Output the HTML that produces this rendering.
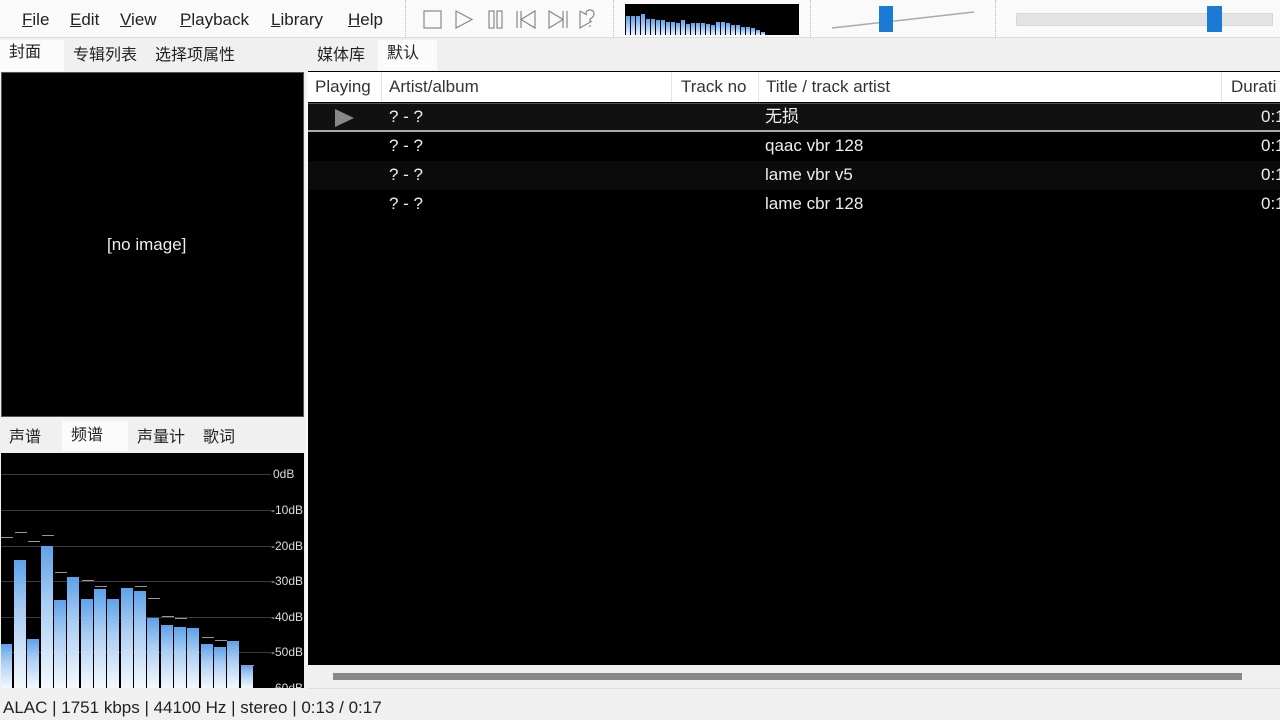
<!DOCTYPE html>
<html><head><meta charset="utf-8"><style>
*{margin:0;padding:0;box-sizing:border-box}
body{width:1280px;height:720px;overflow:hidden;background:#f0f0f0;font-family:"Liberation Sans","Noto Sans CJK SC",sans-serif;position:relative;color:#111}
.a{position:absolute;white-space:nowrap}
.menu{font-size:17px;top:10px;color:#222}
.sep{position:absolute;top:0;width:0;height:38px;border-left:1px dotted #bbb}
.tab{position:absolute;top:40px;height:31px;font-size:16px;line-height:20px;padding:4px 0 0 9px;color:#222}
.hd{position:absolute;top:72px;height:30px;font-size:17px;color:#333;padding:5px 0 0 7px;border-right:1px solid #e3e3e3;background:#fff}
.row{position:absolute;left:308px;width:972px;height:29px;font-size:17px;color:#eee}
.row span{position:absolute;top:4px;line-height:20px}
.bar{position:absolute;bottom:0;width:12px;background:linear-gradient(to bottom,#5da2ea 0,#aacdf3 40%,#f4f9fe 100%)}
.pk{position:absolute;width:12px;height:1px;background:#999}
.db{position:absolute;left:270px;font-size:12px;color:#ddd}
.gl{position:absolute;left:0;width:270px;height:1px;background:#3a3a3a}
</style></head><body>
<div class="a" style="left:0;top:0;width:1280px;height:38px;background:#fafafa;border-bottom:1px solid #ddd"></div>
<div class="a menu" style="left:22px"><u>F</u>ile</div>
<div class="a menu" style="left:70px"><u>E</u>dit</div>
<div class="a menu" style="left:120px"><u>V</u>iew</div>
<div class="a menu" style="left:180px"><u>P</u>layback</div>
<div class="a menu" style="left:271px"><u>L</u>ibrary</div>
<div class="a menu" style="left:348px"><u>H</u>elp</div>
<div class="sep" style="left:405px"></div><div class="sep" style="left:613px"></div><div class="sep" style="left:810px"></div><div class="sep" style="left:995px"></div>
<svg class="a" style="left:420px;top:8px" width="185" height="24" viewBox="0 0 185 24" fill="none" stroke="#888" stroke-width="1.2">
<rect x="4" y="3" width="17" height="17"/>
<path d="M36 3 L52 11.5 L36 20 Z"/>
<rect x="69" y="3" width="5" height="17"/><rect x="77" y="3" width="5" height="17"/>
<path d="M97 3 V20 M101 3 V20 M101 11.5 L115 3 V20 Z"/>
<path d="M129 3 V20 L143 11.5 Z M143 3 V20 M147 3 V20"/>
<path d="M160 3 V20 L172 13 M160 3 L167 7"/><path d="M166 6 Q166 2 170 2 Q174 2 174 6 Q174 9 170 11 V14 M170 17 V19" />
</svg>
<div class="a" style="left:625px;top:4px;width:174px;height:31px;background:#000;overflow:hidden">
<svg width="174" height="31"><defs><linearGradient id="g" x1="0" y1="0" x2="0" y2="1"><stop offset="0" stop-color="#5da2ea"/><stop offset="1" stop-color="#eef6ff"/></linearGradient></defs>
<g fill="url(#g)">
<rect x="1" y="12" width="4" height="19"/><rect x="6" y="12" width="4" height="19"/><rect x="11" y="12" width="4" height="19"/><rect x="16" y="10" width="4" height="21"/><rect x="21" y="15" width="4" height="16"/><rect x="26" y="15" width="4" height="16"/><rect x="31" y="16" width="4" height="15"/><rect x="36" y="16" width="4" height="15"/><rect x="41" y="18" width="4" height="13"/><rect x="46" y="18" width="4" height="13"/><rect x="51" y="19" width="4" height="12"/><rect x="56" y="16" width="4" height="15"/><rect x="61" y="20" width="4" height="11"/><rect x="66" y="19" width="4" height="12"/><rect x="71" y="19" width="4" height="12"/><rect x="76" y="19" width="4" height="12"/><rect x="81" y="20" width="4" height="11"/><rect x="86" y="21" width="4" height="10"/><rect x="91" y="18" width="4" height="13"/><rect x="96" y="18" width="4" height="13"/><rect x="101" y="19" width="4" height="12"/><rect x="106" y="21" width="4" height="10"/><rect x="111" y="21" width="4" height="10"/><rect x="116" y="23" width="4" height="8"/><rect x="121" y="23" width="4" height="8"/><rect x="126" y="24" width="4" height="7"/><rect x="131" y="26" width="4" height="5"/><rect x="136" y="28" width="4" height="3"/></g></svg></div>
<svg class="a" style="left:830px;top:6px" width="150" height="28"><line x1="2" y1="22" x2="144" y2="6" stroke="#aaa" stroke-width="1.5"/><rect x="49" y="0" width="14" height="26" fill="#1a7ad4"/></svg>
<div class="a" style="left:1016px;top:13px;width:257px;height:13px;background:#e4e4e4;border:1px solid #d8d8d8"></div>
<div class="a" style="left:1207px;top:6px;width:15px;height:26px;background:#1a7ad4"></div>

<div class="tab" style="left:0;width:64px;background:#fbfbfb;padding-top:3px">封面</div>
<div class="tab" style="left:64px;width:82px;padding-top:6px">专辑列表</div>
<div class="tab" style="left:146px;width:100px;padding-top:6px">选择项属性</div>
<div class="a" style="left:1px;top:72px;width:303px;height:345px;background:#000;border:1px solid #555"></div>
<div class="a" style="left:107px;top:235px;font-size:17px;color:#eee">[no image]</div>
<div class="tab" style="left:0;top:421px;width:62px;height:30px;padding-top:7px">声谱</div>
<div class="tab" style="left:62px;top:421px;width:66px;height:30px;padding-top:5px;background:#fbfbfb">频谱</div>
<div class="tab" style="left:128px;top:421px;width:66px;height:30px;padding-top:7px">声量计</div>
<div class="tab" style="left:194px;top:421px;width:58px;height:30px;padding-top:7px">歌词</div>
<div class="a" style="left:1px;top:453px;width:303px;height:235px;background:#000;overflow:hidden">
<div class="gl" style="top:21px"></div><div class="gl" style="top:57px"></div><div class="gl" style="top:93px"></div><div class="gl" style="top:128px"></div><div class="gl" style="top:164px"></div><div class="gl" style="top:199px"></div>
<div class="bar" style="left:-1px;height:44px"></div>
<div class="bar" style="left:13px;height:128px"></div>
<div class="bar" style="left:26px;height:49px"></div>
<div class="bar" style="left:40px;height:142px"></div>
<div class="bar" style="left:53px;height:88px"></div>
<div class="bar" style="left:66px;height:111px"></div>
<div class="bar" style="left:80px;height:89px"></div>
<div class="bar" style="left:93px;height:99px"></div>
<div class="bar" style="left:106px;height:89px"></div>
<div class="bar" style="left:120px;height:100px"></div>
<div class="bar" style="left:133px;height:97px"></div>
<div class="bar" style="left:146px;height:70px"></div>
<div class="bar" style="left:160px;height:63px"></div>
<div class="bar" style="left:173px;height:61px"></div>
<div class="bar" style="left:186px;height:60px"></div>
<div class="bar" style="left:200px;height:44px"></div>
<div class="bar" style="left:213px;height:41px"></div>
<div class="bar" style="left:226px;height:47px"></div>
<div class="bar" style="left:240px;height:23px"></div>
<div class="pk" style="left:0;top:84px"></div><div class="pk" style="left:14px;top:79px"></div><div class="pk" style="left:27px;top:88px"></div><div class="pk" style="left:41px;top:82px"></div><div class="pk" style="left:54px;top:119px"></div><div class="pk" style="left:81px;top:127px"></div><div class="pk" style="left:94px;top:133px"></div><div class="pk" style="left:134px;top:133px"></div><div class="pk" style="left:147px;top:145px"></div><div class="pk" style="left:161px;top:163px"></div><div class="pk" style="left:174px;top:165px"></div><div class="pk" style="left:201px;top:184px"></div><div class="pk" style="left:214px;top:187px"></div><div class="pk" style="left:241px;top:212px"></div>
<div class="db" style="left:272px;top:14px">0dB</div><div class="db" style="top:50px">-10dB</div><div class="db" style="top:86px">-20dB</div><div class="db" style="top:121px">-30dB</div><div class="db" style="top:157px">-40dB</div><div class="db" style="top:192px">-50dB</div><div class="db" style="top:228px">-60dB</div>
</div>

<div class="tab" style="left:308px;width:70px;padding-top:6px">媒体库</div>
<div class="tab" style="left:378px;width:59px;padding-top:4px;background:#fbfbfb">默认</div>
<div class="a" style="left:306px;top:71px;width:974px;height:594px;background:#000;border-left:2px solid #f8f8f8"></div>
<div class="hd" style="left:308px;width:74px">Playing</div>
<div class="hd" style="left:382px;width:290px">Artist/album</div>
<div class="hd" style="left:672px;width:87px;padding-left:9px">Track no</div>
<div class="hd" style="left:759px;width:463px">Title / track artist</div>
<div class="hd" style="left:1222px;width:58px;padding-left:9px;border:0">Durati</div>
<div class="row" style="top:103px;background:#111;border-top:1px solid #555;border-bottom:2px solid #aaa;height:29px">
<svg class="a" style="left:26px;top:5px" width="22" height="18"><path d="M1 0 L20 9 L1 18Z" fill="#888"/></svg>
<span style="left:81px;top:3px">? - ?</span><span style="left:457px;top:3px">无损</span><span style="left:953px;top:3px">0:1</span></div>
<div class="row" style="top:132px"><span style="left:81px">? - ?</span><span style="left:457px">qaac vbr 128</span><span style="left:953px">0:1</span></div>
<div class="row" style="top:161px;background:#0b0b0b"><span style="left:81px">? - ?</span><span style="left:457px">lame vbr v5</span><span style="left:953px">0:1</span></div>
<div class="row" style="top:190px"><span style="left:81px">? - ?</span><span style="left:457px">lame cbr 128</span><span style="left:953px">0:1</span></div>
<div class="a" style="left:308px;top:665px;width:972px;height:24px;background:#f0f0f0;border-bottom:1px solid #ddd"></div>
<div class="a" style="left:333px;top:673px;width:909px;height:7px;background:#888"></div>
<div class="a" style="left:3px;top:698px;font-size:17px;color:#222">ALAC | 1751 kbps | 44100 Hz | stereo | 0:13 / 0:17</div>
</body></html>
